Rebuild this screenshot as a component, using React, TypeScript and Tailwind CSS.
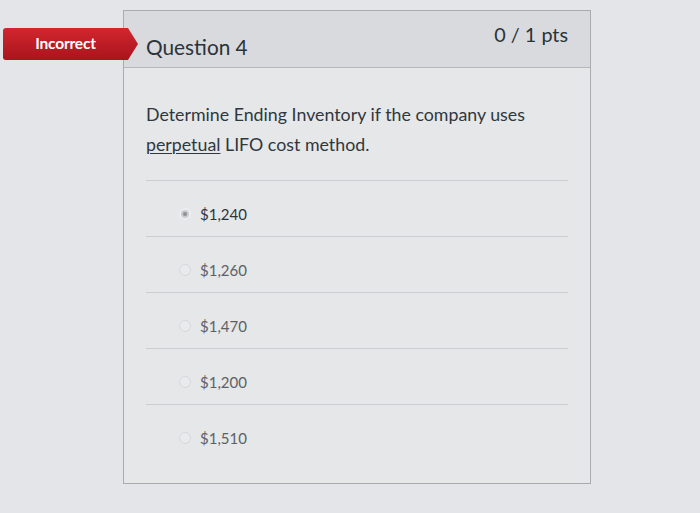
const answers = [
  { label: "$1,240", selected: true },
  { label: "$1,260", selected: false },
  { label: "$1,470", selected: false },
  { label: "$1,200", selected: false },
  { label: "$1,510", selected: false },
];

function Radio({ selected }: { selected: boolean }) {
  if (selected) {
    return (
      <span className="w-[12px] h-[12px] rounded-full bg-[#c9cbce] border-2 border-[#eceef0] flex items-center justify-center shrink-0">
        <span className="w-[4px] h-[4px] rounded-full bg-[#8d9094]" />
      </span>
    );
  }
  return <span className="w-[12px] h-[12px] rounded-full border border-[#d6d8db] bg-[#e8eaec] shrink-0" />;
}

export default function App() {
  return (
    <div className="relative min-h-screen w-[700px] h-[513px] overflow-hidden bg-[#e3e5e8] font-['Lato','Open_Sans',sans-serif] pt-[10px]">
      {/* Incorrect badge */}
      <div className="absolute left-[3px] top-[28px] z-10 h-[32px] w-[135px] rounded-l-[3px] bg-gradient-to-b from-[#d2262f] to-[#a9141c] [clip-path:polygon(0_0,calc(100%-10px)_0,100%_50%,calc(100%-10px)_100%,0_100%)] shadow-sm">
        <div className="w-[125px] h-full flex items-center justify-center text-white font-bold text-[15.5px] tracking-[-0.2px]">
          Incorrect
        </div>
      </div>

      {/* Question card */}
      <div className="ml-[123px] w-[468px] border border-[#a9abae] bg-[#e5e7e9]">
        <div className="h-[57px] bg-[#d8dadd] border-b border-[#b5b7ba] px-[22px] flex justify-between items-start">
          <div className="mt-[24px] text-[20.8px] leading-[24px] text-[#2a333a]">Question 4</div>
          <div className="mt-[11px] text-[19.8px] leading-[24px] text-[#2a333a]">0 / 1 pts</div>
        </div>

        <div className="px-[22px] pt-[31px] pb-[23px]">
          <p className="text-[17.8px] leading-[30px] text-[#30373d]">
            Determine Ending Inventory if the company uses{" "}
            <span className="underline underline-offset-[2px] decoration-1">perpetual</span> LIFO cost method.
          </p>

          <div className="mt-[21px]">
            {answers.map((a) => (
              <div
                key={a.label}
                className="border-t border-[#cbcdd0] pt-[22px] pb-[11px] pl-[33px] flex items-center gap-[9px]"
              >
                <Radio selected={a.selected} />
                <span
                  className={
                    a.selected
                      ? "text-[15px] leading-[22px] text-[#2d353c]"
                      : "text-[15px] leading-[22px] text-[#5c6166]"
                  }
                >
                  {a.label}
                </span>
              </div>
            ))}
          </div>
        </div>
      </div>
    </div>
  );
}
